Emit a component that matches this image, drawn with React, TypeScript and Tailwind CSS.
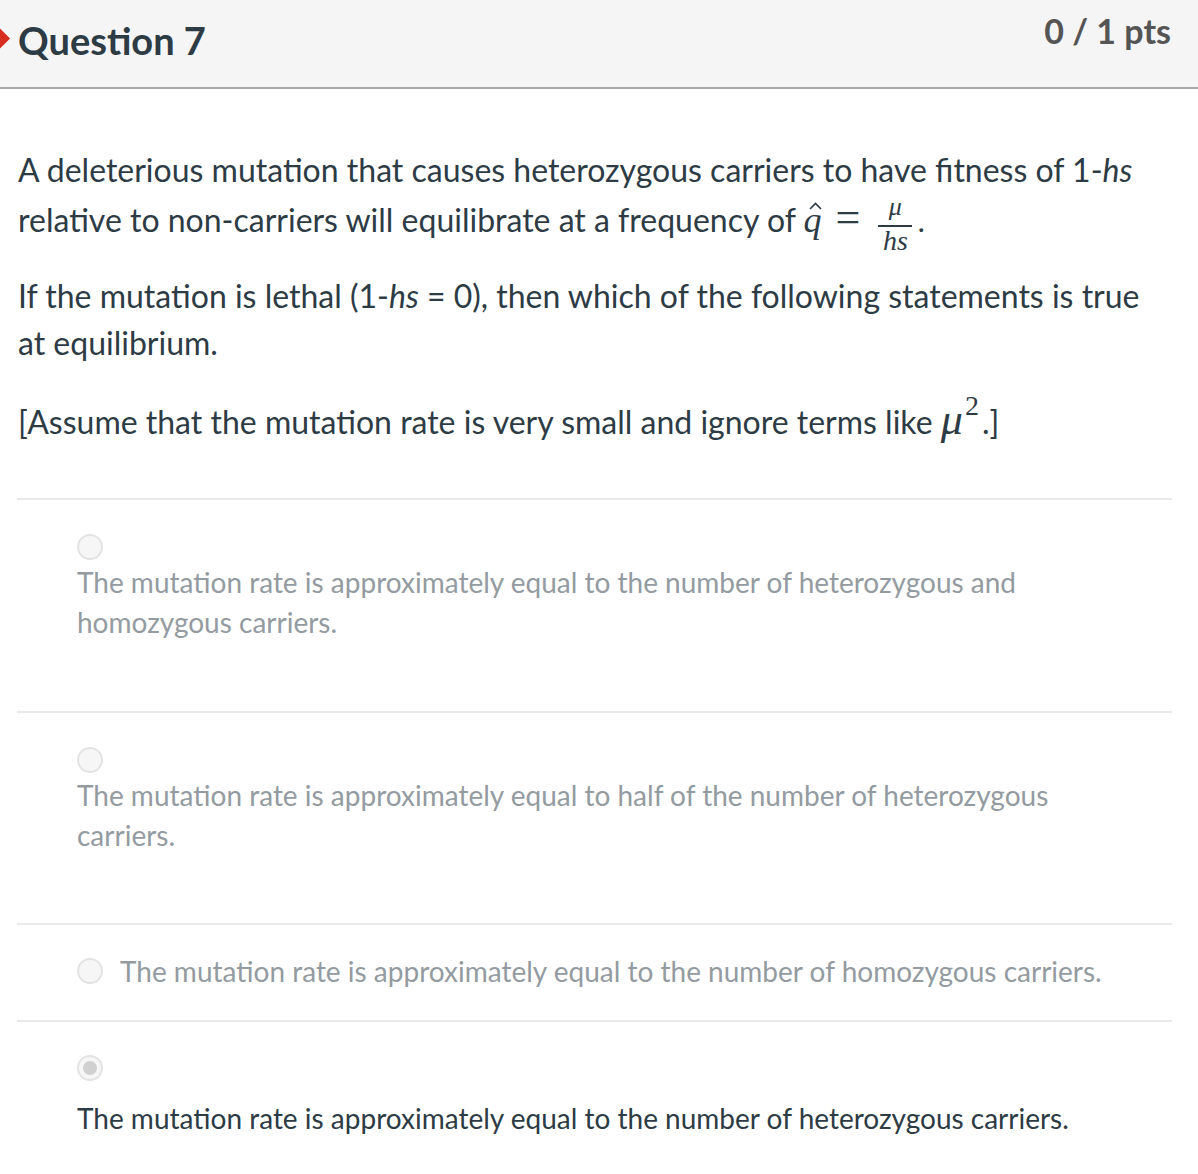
import React from 'react';

const math = "[font-family:'Liberation_Serif','DejaVu_Serif',serif]";

const answers = [
    {
        id: 'a1',
        text: 'The mutation rate is approximately equal to the number of heterozygous and homozygous carriers.',
        layout: 'stack',
        selected: false,
        box: 'pt-[34px] pb-[69px]',
    },
    {
        id: 'a2',
        text: 'The mutation rate is approximately equal to half of the number of heterozygous carriers.',
        layout: 'stack',
        selected: false,
        box: 'pt-[34px] pb-[68px]',
    },
    {
        id: 'a3',
        text: 'The mutation rate is approximately equal to the number of homozygous carriers.',
        layout: 'inline',
        selected: false,
        box: 'pt-[26px] pb-[29px]',
    },
    {
        id: 'a4',
        text: 'The mutation rate is approximately equal to the number of heterozygous carriers.',
        layout: 'stack',
        selected: true,
        box: 'pt-[33px] pb-[36px]',
    },
];

const Radio: React.FC<{ checked: boolean }> = ({ checked }) => (
    <span className="flex h-[26px] w-[26px] shrink-0 items-center justify-center rounded-full border-2 border-[#e3e3e3] bg-[#f6f6f6]">
        {checked && <span className="h-[14px] w-[14px] rounded-full bg-[#d0d0d0]" />}
    </span>
);

const App: React.FC = () => {
    return (
        <div className="min-h-[1174px] bg-white text-[#2d3b45] [font-family:Lato,'Liberation_Sans',sans-serif]">
            {/* header */}
            <div className="relative flex h-[89px] items-start justify-between border-b-2 border-[#a8a8a8] bg-[#f5f5f5] pl-[18px] pr-[27px]">
                <span className="absolute left-[-8px] top-[31px] h-[15px] w-[15px] rotate-45 bg-[#d62d20]" />
                <h1 className="mt-[16px] text-[38px] font-bold leading-[48px]">Question 7</h1>
                <div className="mt-[8px] text-[34px] font-bold leading-[46px] text-[#555]">0 / 1 pts</div>
            </div>

            <div className="pl-[17px] pr-[26px]">
                <div className="px-[1px] pt-[57px] text-[32px] leading-[48px]">
                    <p>
                        A deleterious mutation that causes heterozygous carriers to have fitness of 1-<i>hs</i> relative
                        to non-carriers will equilibrate at a frequency of{' '}
                        <span className={`relative inline-block ${math} italic text-[36px] leading-none`}>
                            q
                            <svg
                                className="absolute left-[5px] top-[0px]"
                                width="13"
                                height="8"
                                viewBox="0 0 13 8"
                                fill="none"
                                stroke="#2d3b45"
                                strokeWidth="1.6"
                            >
                                <path d="M1 7 L6.5 1.5 L12 7" />
                            </svg>
                        </span>
                        <span className={`ml-[14px] mr-[18px] ${math} text-[44px] leading-none`}>=</span>
                        <span className="inline-flex flex-col items-center align-middle">
                            <span className={`${math} italic text-[26px] leading-[26px] pb-[4px]`}>μ</span>
                            <span className="my-[1px] h-[2px] w-[34px] bg-[#2d3b45]" />
                            <span className={`${math} italic text-[28px] leading-[26px]`}>hs</span>
                        </span>
                        <span className={`${math} ml-[5px]`}>.</span>
                    </p>
                    <p className="mt-[18px] leading-[47px]">
                        If the mutation is lethal (1-<i>hs</i> = 0), then which of the following statements is true at
                        equilibrium.
                    </p>
                    <p className="mt-[32px] leading-[47px]">
                        [Assume that the mutation rate is very small and ignore terms like{' '}
                        <span className={`${math} italic text-[44px] leading-none`}>μ</span>
                        <span className={`${math} relative top-[-19px] ml-[2px] mr-[3px] text-[28px] leading-none`}>2</span>.]
                    </p>
                </div>

                <div className="mt-[53px]">
                    {answers.map((a) => (
                        <div key={a.id} className={`border-t-2 border-[#e8eaec] pl-[60px] ${a.box}`}>
                            {a.layout === 'inline' ? (
                                <div className="flex items-center gap-[17px]">
                                    <Radio checked={a.selected} />
                                    <span className="text-[28px] leading-[40px] text-[#939ba1]">{a.text}</span>
                                </div>
                            ) : (
                                <div>
                                    <Radio checked={a.selected} />
                                    <p
                                        className={`pr-[60px] text-[28px] leading-[40px] ${
                                            a.selected ? 'mt-[17px] text-[#2d3b45]' : 'mt-[2px] text-[#939ba1]'
                                        }`}
                                    >
                                        {a.text}
                                    </p>
                                </div>
                            )}
                        </div>
                    ))}
                </div>
            </div>
        </div>
    );
};

export default App;
